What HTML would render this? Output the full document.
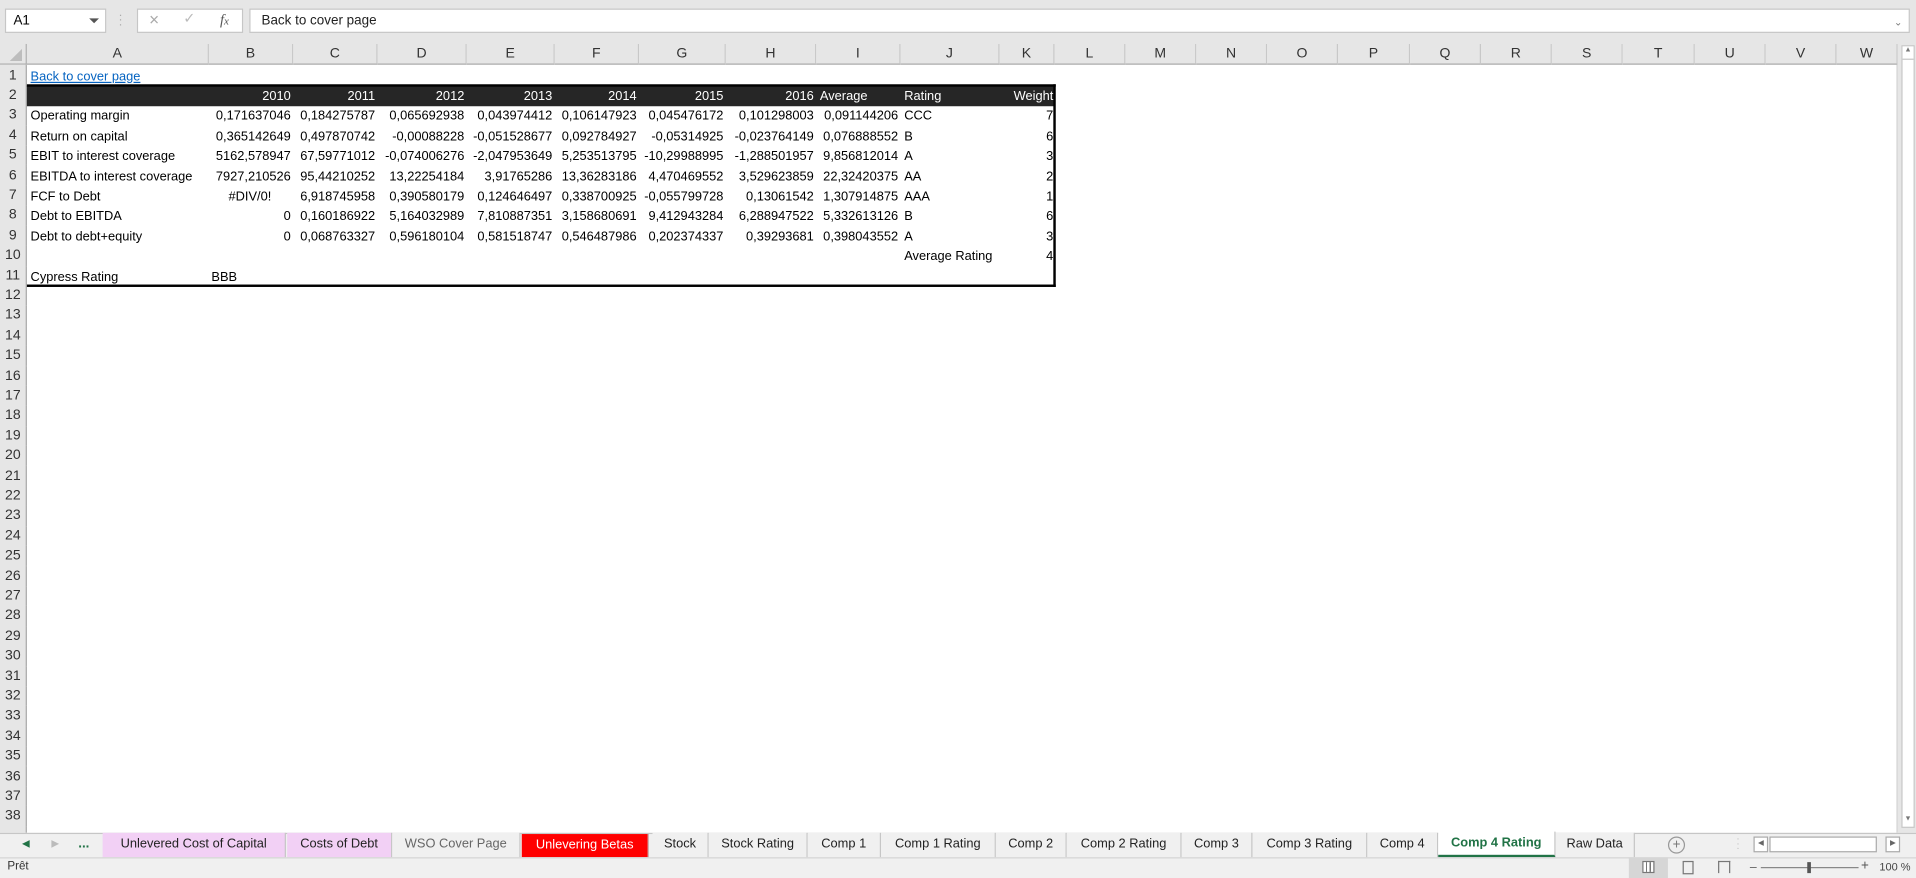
<!DOCTYPE html>
<html><head><meta charset="utf-8"><style>
html,body{margin:0;padding:0;width:1916px;height:878px;overflow:hidden;background:#fff}
#s{position:absolute;left:0;top:0;width:1568px;height:719px;transform:scale(1.22194,1.22114);transform-origin:0 0;font-family:"Liberation Sans",Arial,sans-serif;font-size:10.5px;color:#000;background:#fff;overflow:hidden}
.a{position:absolute;white-space:nowrap}
.top{left:0;top:0;width:1568px;height:36px;background:#e6e6e6}
.box{background:#fff;border:1px solid #c6c6c6;box-sizing:border-box}
.ch{top:36px;height:17px;background:#e6e6e6;border-bottom:1px solid #ababab;box-sizing:border-box;line-height:17px;text-align:center;color:#333;font-size:11.5px;border-right:1px solid #c8c8c8}
.rh{left:0;width:22px;height:16.4px;background:#e6e6e6;text-align:center;box-sizing:border-box;line-height:16.4px;color:#333;font-size:11.5px;border-right:1px solid #ababab}
.r{position:absolute;left:0;width:1552px;height:16.4px;line-height:16.4px}
.r span{position:absolute;top:1px;white-space:nowrap}
.n{text-align:right}
.A{left:25px}
.B{left:171px;width:67px}.C{left:240px;width:67px}.D{left:309px;width:71px}.E{left:382px;width:70px}.F{left:454px;width:67px}.G{left:523px;width:69px}.H{left:594px;width:72px}.I{left:668px;width:67px}.J{left:740px}.K{left:818px;width:44px}
.tab{position:absolute;top:682px;height:20px;line-height:19px;text-align:center;font-size:10.5px;border-right:1px solid #c6c6c6;box-sizing:border-box;background:#f0f0f0;color:#222}
</style></head><body><div id="s">
<div class="a top"></div>
<div class="a box" style="left:4px;top:7px;width:83px;height:20px;line-height:18px;padding-left:6px;font-size:11px">A1</div>
<div class="a" style="left:73px;top:15px;width:0;height:0;border-left:4px solid transparent;border-right:4px solid transparent;border-top:4px solid #555"></div>
<div class="a" style="left:97px;top:11px;color:#aaa;font-size:10px;line-height:4px">·<br>·<br>·</div>
<div class="a box" style="left:112px;top:7px;width:87px;height:20px"></div>
<div class="a" style="left:122px;top:8px;color:#aaa;font-size:14px">×</div>
<div class="a" style="left:150px;top:8px;color:#bbb;font-size:12px">✓</div>
<div class="a" style="left:180px;top:9px;color:#555;font-family:'Liberation Serif',serif;font-style:italic;font-size:12px">f<span style="font-size:9px">x</span></div>
<div class="a box" style="left:204px;top:7px;width:1359px;height:20px;line-height:18px;padding-left:9px;font-size:11px;color:#222">Back to cover page</div>
<div class="a" style="left:1550px;top:14px;color:#777;font-size:8px">&#8964;</div>

<div class="a ch" style="left:0;width:22px;border-right:1px solid #ababab"></div>
<div class="a" style="left:8px;top:40px;width:0;height:0;border-left:10px solid transparent;border-bottom:10px solid #bdbdbd"></div>
<div class="a ch" style="left:22px;width:149px">A</div>
<div class="a ch" style="left:171px;width:69px">B</div>
<div class="a ch" style="left:240px;width:69px">C</div>
<div class="a ch" style="left:309px;width:73px">D</div>
<div class="a ch" style="left:382px;width:72px">E</div>
<div class="a ch" style="left:454px;width:69px">F</div>
<div class="a ch" style="left:523px;width:71px">G</div>
<div class="a ch" style="left:594px;width:74px">H</div>
<div class="a ch" style="left:668px;width:69px">I</div>
<div class="a ch" style="left:737px;width:81px">J</div>
<div class="a ch" style="left:818px;width:45px">K</div>
<div class="a ch" style="left:863px;width:58px">L</div>
<div class="a ch" style="left:921px;width:58px">M</div>
<div class="a ch" style="left:979px;width:58px">N</div>
<div class="a ch" style="left:1037px;width:58px">O</div>
<div class="a ch" style="left:1095px;width:59px">P</div>
<div class="a ch" style="left:1154px;width:58px">Q</div>
<div class="a ch" style="left:1212px;width:58px">R</div>
<div class="a ch" style="left:1270px;width:58px">S</div>
<div class="a ch" style="left:1328px;width:59px">T</div>
<div class="a ch" style="left:1387px;width:58px">U</div>
<div class="a ch" style="left:1445px;width:58px">V</div>
<div class="a ch" style="left:1503px;width:50px">W</div>
<div class="a" style="left:1553px;top:36px;width:15px;height:646px;background:#e6e6e6"></div>
<div class="a" style="left:1556px;top:37px;width:11px;height:641px;background:#fff;border:1px solid #c6c6c6;box-sizing:border-box"></div>
<div class="a" style="left:1557px;top:38px;width:9px;height:10px;background:#fff;border-bottom:1px solid #c6c6c6;font-size:6px;text-align:center;color:#777">▲</div>
<div class="a" style="left:1557px;top:668px;width:9px;height:10px;font-size:6px;text-align:center;color:#777">▼</div>
<div class="a" style="left:1552px;top:53px;width:1px;height:629px;background:#d0d0d0"></div>

<div class="a" style="left:0;top:53px;width:22px;height:629px;background:#e6e6e6;border-right:1px solid #ababab;box-sizing:border-box"></div>
<div class="a" style="left:0;top:53.5px">
<div class="a rh" style="top:0px">1</div><div class="a rh" style="top:16.4px">2</div><div class="a rh" style="top:32.8px">3</div><div class="a rh" style="top:49.2px">4</div><div class="a rh" style="top:65.6px">5</div><div class="a rh" style="top:82px">6</div><div class="a rh" style="top:98.4px">7</div><div class="a rh" style="top:114.8px">8</div><div class="a rh" style="top:131.2px">9</div><div class="a rh" style="top:147.6px">10</div><div class="a rh" style="top:164px">11</div><div class="a rh" style="top:180.4px">12</div><div class="a rh" style="top:196.8px">13</div><div class="a rh" style="top:213.2px">14</div><div class="a rh" style="top:229.6px">15</div><div class="a rh" style="top:246px">16</div><div class="a rh" style="top:262.4px">17</div><div class="a rh" style="top:278.8px">18</div><div class="a rh" style="top:295.2px">19</div><div class="a rh" style="top:311.6px">20</div><div class="a rh" style="top:328px">21</div><div class="a rh" style="top:344.4px">22</div><div class="a rh" style="top:360.8px">23</div><div class="a rh" style="top:377.2px">24</div><div class="a rh" style="top:393.6px">25</div><div class="a rh" style="top:410px">26</div><div class="a rh" style="top:426.4px">27</div><div class="a rh" style="top:442.8px">28</div><div class="a rh" style="top:459.2px">29</div><div class="a rh" style="top:475.6px">30</div><div class="a rh" style="top:492px">31</div><div class="a rh" style="top:508.4px">32</div><div class="a rh" style="top:524.8px">33</div><div class="a rh" style="top:541.2px">34</div><div class="a rh" style="top:557.6px">35</div><div class="a rh" style="top:574px">36</div><div class="a rh" style="top:590.4px">37</div><div class="a rh" style="top:606.8px">38</div>
</div>

<div class="a" style="left:22px;top:69.5px;width:841px;height:17px;background:#262626"></div>
<div class="a" style="left:22px;top:68.5px;width:842px;height:166px;border:2px solid #000;border-left:none;box-sizing:border-box"></div>

<div class="r" style="top:53.5px"><span class="A" style="color:#0563c1;text-decoration:underline">Back to cover page </span></div>
<div class="r" style="top:69.9px;color:#fff"><span class="B n">2010</span><span class="C n">2011</span><span class="D n">2012</span><span class="E n">2013</span><span class="F n">2014</span><span class="G n">2015</span><span class="H n">2016</span><span style="left:671px">Average</span><span class="J">Rating</span><span class="K n">Weight</span></div>
<div class="r" style="top:86.3px"><span class="A">Operating margin</span><span class="B n">0,171637046</span><span class="C n">0,184275787</span><span class="D n">0,065692938</span><span class="E n">0,043974412</span><span class="F n">0,106147923</span><span class="G n">0,045476172</span><span class="H n">0,101298003</span><span class="I n">0,091144206</span><span class="J">CCC</span><span class="K n">7</span></div>
<div class="r" style="top:102.7px"><span class="A">Return on capital</span><span class="B n">0,365142649</span><span class="C n">0,497870742</span><span class="D n">-0,00088228</span><span class="E n">-0,051528677</span><span class="F n">0,092784927</span><span class="G n">-0,05314925</span><span class="H n">-0,023764149</span><span class="I n">0,076888552</span><span class="J">B</span><span class="K n">6</span></div>
<div class="r" style="top:119.1px"><span class="A">EBIT to interest coverage</span><span class="B n">5162,578947</span><span class="C n">67,59771012</span><span class="D n">-0,074006276</span><span class="E n">-2,047953649</span><span class="F n">5,253513795</span><span class="G n">-10,29988995</span><span class="H n">-1,288501957</span><span class="I n">9,856812014</span><span class="J">A</span><span class="K n">3</span></div>
<div class="r" style="top:135.5px"><span class="A">EBITDA to interest coverage</span><span class="B n">7927,210526</span><span class="C n">95,44210252</span><span class="D n">13,22254184</span><span class="E n">3,91765286</span><span class="F n">13,36283186</span><span class="G n">4,470469552</span><span class="H n">3,529623859</span><span class="I n">22,32420375</span><span class="J">AA</span><span class="K n">2</span></div>
<div class="r" style="top:151.9px"><span class="A">FCF to Debt</span><span class="B" style="text-align:center">#DIV/0!</span><span class="C n">6,918745958</span><span class="D n">0,390580179</span><span class="E n">0,124646497</span><span class="F n">0,338700925</span><span class="G n">-0,055799728</span><span class="H n">0,13061542</span><span class="I n">1,307914875</span><span class="J">AAA</span><span class="K n">1</span></div>
<div class="r" style="top:168.3px"><span class="A">Debt to EBITDA</span><span class="B n">0</span><span class="C n">0,160186922</span><span class="D n">5,164032989</span><span class="E n">7,810887351</span><span class="F n">3,158680691</span><span class="G n">9,412943284</span><span class="H n">6,288947522</span><span class="I n">5,332613126</span><span class="J">B</span><span class="K n">6</span></div>
<div class="r" style="top:184.7px"><span class="A">Debt to debt+equity</span><span class="B n">0</span><span class="C n">0,068763327</span><span class="D n">0,596180104</span><span class="E n">0,581518747</span><span class="F n">0,546487986</span><span class="G n">0,202374337</span><span class="H n">0,39293681</span><span class="I n">0,398043552</span><span class="J">A</span><span class="K n">3</span></div>
<div class="r" style="top:201.1px"><span class="J">Average Rating</span><span class="K n">4</span></div>
<div class="r" style="top:217.5px"><span class="A">Cypress Rating</span><span style="left:173px">BBB</span></div>

<div class="a" style="left:0;top:682px;width:1568px;height:20px;background:#f0f0f0;border-top:1px solid #c6c6c6;box-sizing:border-box"></div>
<div class="a" style="left:18px;top:686px;color:#217346;font-size:8px">◀</div>
<div class="a" style="left:42px;top:686px;color:#bbb;font-size:8px">▶</div>
<div class="a" style="left:64px;top:685px;color:#217346;font-size:11px;font-weight:bold">...</div>
<div class="tab" style="left:84px;width:150px;background:#f2d0f5">Unlevered Cost of Capital</div>
<div class="tab" style="left:235px;width:86px;background:#f2d0f5">Costs of Debt</div>
<div class="tab" style="left:321px;width:105px;color:#666">WSO Cover Page</div>
<div class="tab" style="left:427px;width:104px;background:#ff0000;color:#fff;top:683px;height:19px">Unlevering Betas</div>
<div class="tab" style="left:534px;width:46px">Stock</div>
<div class="tab" style="left:580px;width:81px">Stock Rating</div>
<div class="tab" style="left:661px;width:60px">Comp 1</div>
<div class="tab" style="left:721px;width:94px">Comp 1 Rating</div>
<div class="tab" style="left:815px;width:58px">Comp 2</div>
<div class="tab" style="left:873px;width:94px">Comp 2 Rating</div>
<div class="tab" style="left:967px;width:58px">Comp 3</div>
<div class="tab" style="left:1025px;width:94px">Comp 3 Rating</div>
<div class="tab" style="left:1119px;width:58px">Comp 4</div>
<div class="tab" style="left:1177px;width:96px;background:#fff;color:#217346;font-weight:bold;top:681px;height:21px;border-bottom:2px solid #217346">Comp 4 Rating</div>
<div class="tab" style="left:1273px;width:65px">Raw Data</div>
<div class="a" style="left:1365px;top:685px;width:12px;height:12px;border:1px solid #999;border-radius:50%;text-align:center;line-height:12px;color:#777;font-size:11px">+</div>
<div class="a" style="left:1421px;top:685px;color:#bbb;font-size:8px;line-height:4px">·<br>·<br>·</div>
<div class="a" style="left:1435px;top:685px;width:12px;height:13px;border:1px solid #aaa;box-sizing:border-box;background:#fff;font-size:6px;line-height:11px;text-align:center;color:#666">◀</div>
<div class="a" style="left:1448px;top:685px;width:88px;height:13px;border:1px solid #aaa;box-sizing:border-box;background:#fff"></div>
<div class="a" style="left:1543px;top:685px;width:12px;height:13px;border:1px solid #aaa;box-sizing:border-box;background:#fff;font-size:6px;line-height:11px;text-align:center;color:#666">▶</div>

<div class="a" style="left:0;top:702px;width:1568px;height:17px;background:#f0f0f0;border-top:1px solid #d4d4d4;box-sizing:border-box"></div>
<div class="a" style="left:6px;top:704px;font-size:9.5px;color:#333">Prêt</div>
<div class="a" style="left:1333px;top:702px;width:32px;height:17px;background:#d6d6d6"></div>
<div class="a" style="left:1344px;top:705px;width:10px;height:10px;border:1px solid #777;box-sizing:border-box;background:repeating-linear-gradient(90deg,transparent 0 2px,#777 2px 3px),#fff"></div>
<div class="a" style="left:1377px;top:705px;width:9px;height:11px;border:1px solid #777;box-sizing:border-box"></div>
<div class="a" style="left:1406px;top:705px;width:10px;height:10px;border:1px solid #777;border-bottom:none;box-sizing:border-box"></div>
<div class="a" style="left:1432px;top:705px;color:#555;font-size:10px">–</div>
<div class="a" style="left:1441px;top:710px;width:80px;height:1px;background:#888"></div>
<div class="a" style="left:1479px;top:706px;width:3px;height:9px;background:#555"></div>
<div class="a" style="left:1523px;top:703px;color:#555;font-size:11px">+</div>
<div class="a" style="left:1538px;top:705px;color:#444;font-size:9px">100 %</div>
</div></body></html>
